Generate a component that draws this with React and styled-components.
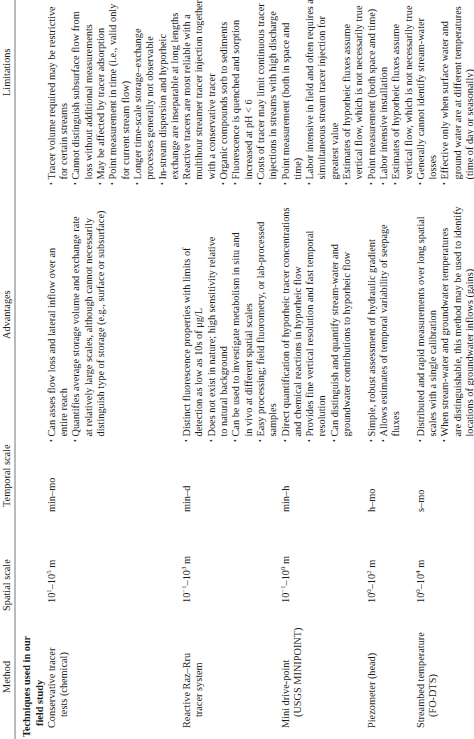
import React from 'react';
import styled, { createGlobalStyle } from 'styled-components';

const Global = createGlobalStyle`
  html, body { margin: 0; padding: 0; background: #fff; }
  body { font-family: "Liberation Serif", "Times New Roman", serif; }
`;

const Page = styled.div`
  width: 474px;
  height: 739px;
  overflow: hidden;
  background: #fff;
`;

const Rotated = styled.div`
  width: 800px;
  transform-origin: 0 0;
  transform: translate(-2.5px, 739px) rotate(-90deg);
  color: #1c1c1c;
  font-size: 10.3px;
  line-height: 12.3px;
`;

const Grid = styled.div`
  display: grid;
  grid-template-columns: 125px 97px 68px 258px 252px;
  border-top: 1px solid #777;
  border-bottom: 1px solid #777;
`;

const HeadCell = styled.div`
  padding: 2px 0 2px ${(p) => p.$pad}px;
  border-bottom: 1px solid #777;
  white-space: nowrap;
`;

const SectionCell = styled.div`
  grid-column: 1 / -1;
  padding: 5px 0 0 13px;
  text-indent: -11px;
  font-weight: bold;
  white-space: nowrap;
`;

const MethodCell = styled.div`
  padding-left: 22px;
  text-indent: -11px;
  white-space: nowrap;
`;

const ValueCell = styled.div`
  padding-left: ${(p) => p.$pad}px;
  white-space: nowrap;
`;

const ListCell = styled.div`
  padding-left: ${(p) => p.$pad}px;
  display: flex;
  flex-direction: column;
  white-space: nowrap;
`;

const Item = styled.div`
  display: flex;
`;

const Bullet = styled.span`
  width: 5.5px;
  flex: none;
  font-size: 8px;
`;

const Sup = styled.sup`
  font-size: 6.8px;
  line-height: 0;
  vertical-align: 3.5px;
`;

const Lines = ({ lines }) =>
  lines.map((l, i) => (
    <React.Fragment key={i}>
      {i > 0 && <br />}
      {l}
    </React.Fragment>
  ));

const Range = ({ a, b }) => (
  <>
    10<Sup>{a}</Sup>–10<Sup>{b}</Sup> m
  </>
);

const rows = [
  {
    method: ['Conservative tracer', 'tests (chemical)'],
    spatial: ['1', '5'],
    temporal: 'min–mo',
    adv: [
      ['Can asses flow loss and lateral inflow over an', 'entire reach'],
      [
        'Quantifies average storage volume and exchange rate',
        'at relatively large scales, although cannot necessarily',
        'distinguish type of storage (e.g., surface or subsurface)',
      ],
    ],
    lim: [
      ['Tracer volume required may be restrictive', 'for certain streams'],
      ['Cannot distinguish subsurface flow from', 'loss without additional measurements'],
      ['May be affected by tracer adsorption'],
      ['Point measurement in time (i.e., valid only', 'for current stream flow)'],
      ['Longer time-scale storage–exchange', 'processes generally not observable'],
      ['In-stream dispersion and hyporheic', 'exchange are inseparable at long lengths'],
    ],
  },
  {
    method: ['Reactive Raz–Rru', 'tracer system'],
    spatial: ['−1', '3'],
    temporal: 'min–d',
    adv: [
      ['Distinct fluorescence properties with limits of', 'detection as low as 10s of μg/L'],
      ['Does not exist in nature; high sensitivity relative', 'to natural background'],
      ['Can be used to investigate metabolism in situ and', 'in vivo at different spatial scales'],
      ['Easy processing; field fluorometry, or lab-processed', 'samples'],
    ],
    lim: [
      [
        'Reactive tracers are most reliable with a',
        'multihour streamer tracer injection together',
        'with a conservative tracer',
      ],
      ['Organic compounds sorb to sediments'],
      ['Fluorescence is quenched and sorption', 'increased at pH < 6'],
      ['Costs of tracer may limit continuous tracer', 'injections in streams with high discharge'],
    ],
  },
  {
    method: ['Mini drive-point', '(USGS MINIPOINT)'],
    spatial: ['−1', '0'],
    temporal: 'min–h',
    adv: [
      [
        'Direct quantification of hyporheic tracer concentrations',
        'and chemical reactions in hyporheic flow',
      ],
      ['Provides fine vertical resolution and fast temporal', 'resolution'],
      ['Can distinguish and quantify stream-water and', 'groundwater contributions to hyporheic flow'],
    ],
    lim: [
      ['Point measurement (both in space and', 'time)'],
      [
        'Labor intensive in field and often requires a',
        'simultaneous stream tracer injection for',
        'greatest value',
      ],
      ['Estimates of hyporheic fluxes assume', 'vertical flow, which is not necessarily true'],
    ],
  },
  {
    method: ['Piezometer (head)'],
    spatial: ['0', '2'],
    temporal: 'h–mo',
    adv: [
      ['Simple, robust assessment of hydraulic gradient'],
      ['Allows estimates of temporal variability of seepage', 'fluxes'],
    ],
    lim: [
      ['Point measurement (both space and time)'],
      ['Labor intensive installation'],
      ['Estimates of hyporheic fluxes assume', 'vertical flow, which is not necessarily true'],
    ],
  },
  {
    method: ['Streambed temperature', '(FO-DTS)'],
    spatial: ['0', '4'],
    temporal: 's–mo',
    adv: [
      ['Distributed and rapid measurements over long spatial', 'scales with a single calibration'],
      [
        'When stream-water and groundwater temperatures',
        'are distinguishable, this method may be used to identify',
        'locations of groundwater inflows (gains)',
      ],
    ],
    lim: [
      ['Generally cannot identify stream-water', 'losses'],
      [
        'Effective only when surface water and',
        'ground water are at different temperatures',
        '(time of day or seasonally)',
      ],
    ],
  },
];

const BulletList = ({ items, pad }) => (
  <ListCell $pad={pad}>
    {items.map((lines, i) => (
      <Item key={i}>
        <Bullet>•</Bullet>
        <span>
          <Lines lines={lines} />
        </span>
      </Item>
    ))}
  </ListCell>
);

export default function App() {
  return (
    <Page>
      <Global />
      <Rotated>
        <Grid>
          <HeadCell $pad={46}>Method</HeadCell>
          <HeadCell $pad={3}>Spatial scale</HeadCell>
          <HeadCell $pad={10}>Temporal scale</HeadCell>
          <HeadCell $pad={110}>Advantages</HeadCell>
          <HeadCell $pad={95}>Limitations</HeadCell>

          <SectionCell>
            Techniques used in our
            <br />
            field study
          </SectionCell>

          {rows.map((r, i) => (
            <React.Fragment key={i}>
              <MethodCell>
                <Lines lines={r.method} />
              </MethodCell>
              <ValueCell $pad={11}>
                <Range a={r.spatial[0]} b={r.spatial[1]} />
              </ValueCell>
              <ValueCell $pad={5}>{r.temporal}</ValueCell>
              <BulletList items={r.adv} pad={7} />
              <BulletList items={r.lim} pad={6} />
            </React.Fragment>
          ))}
        </Grid>
      </Rotated>
    </Page>
  );
}
